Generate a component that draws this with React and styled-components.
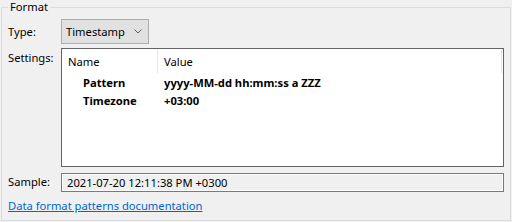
import { createGlobalStyle } from "styled-components";
import styled from "styled-components";

const GlobalStyle = createGlobalStyle`
  html, body {
    margin: 0;
    padding: 0;
    background: #f0f0f0;
  }
  body {
    font-family: "Noto Sans", "Segoe UI", sans-serif;
    font-size: 11.2px;
    color: #000;
  }
`;

const Page = styled.div`
  width: 512px;
  height: 222px;
  padding: 0 1px;
  box-sizing: border-box;
  background: #f0f0f0;
`;

const Group = styled.fieldset`
  margin: 0;
  height: 221px;
  box-sizing: border-box;
  border: 1px solid #dcdcdc;
  padding: 5px 6px 0 6px;
  display: grid;
  grid-template-columns: 53px 1fr;
  grid-template-rows: 25px 119px 21px auto;
  row-gap: 4px;
  min-width: 0;
`;

const Legend = styled.legend`
  padding: 0 2px;
  line-height: 14px;
`;

const Label = styled.div`
  line-height: 16px;
  align-self: ${(p) => (p.$top ? "start" : "center")};
  padding-top: ${(p) => (p.$top ? "2px" : "0")};
`;

const Combo = styled.div`
  width: 88px;
  box-sizing: border-box;
  border: 1px solid #adadad;
  background: #e1e1e1;
  display: flex;
  align-items: center;
  justify-content: space-between;
  padding: 0 6px 0 4px;
`;

const Table = styled.div`
  width: 443px;
  box-sizing: border-box;
  border: 1px solid #646464;
  background: #fff;
`;

const Row = styled.div`
  display: grid;
  grid-template-columns: 96px 1fr;
  height: ${(p) => (p.$head ? "24px" : "18px")};
  align-items: center;
  font-weight: ${(p) => (p.$head ? 400 : 700)};
`;

const Cell = styled.div`
  height: 100%;
  display: flex;
  align-items: center;
  padding-left: ${(p) => p.$indent || 6}px;
  border-right: ${(p) => (p.$sep ? "1px solid #e5e5e5" : "none")};
  margin-right: ${(p) => (p.$last ? "1px" : "0")};
  white-space: nowrap;
`;

const SampleField = styled.div`
  width: 443px;
  box-sizing: border-box;
  border: 1px solid #7a7a7a;
  box-shadow: inset 0 0 0 1px #ffffff;
  background: #f0f0f0;
  display: flex;
  align-items: center;
  padding-left: 5px;
  margin-top: 2px;
`;

const DocLink = styled.a`
  grid-column: 1 / span 2;
  color: #0066cc;
  text-decoration: underline;
  line-height: 16px;
  margin-top: 2px;
  cursor: pointer;
`;

const Chevron = () => (
  <svg width="8" height="5" viewBox="0 0 8 5">
    <path d="M0.5 0.5 L4 4 L7.5 0.5" fill="none" stroke="#606060" strokeWidth="1" />
  </svg>
);

const settings = [
  { name: "Pattern", value: "yyyy-MM-dd hh:mm:ss a ZZZ" },
  { name: "Timezone", value: "+03:00" },
];

export default function App() {
  return (
    <Page>
      <GlobalStyle />
      <Group>
        <Legend>Format</Legend>
        <Label>Type:</Label>
        <Combo>
          <span>Timestamp</span>
          <Chevron />
        </Combo>
        <Label $top>Settings:</Label>
        <Table>
          <Row $head>
            <Cell $sep>Name</Cell>
            <Cell $sep $last>Value</Cell>
          </Row>
          {settings.map((s) => (
            <Row key={s.name}>
              <Cell $indent={21}>{s.name}</Cell>
              <Cell>{s.value}</Cell>
            </Row>
          ))}
        </Table>
        <Label>Sample:</Label>
        <SampleField>2021-07-20 12:11:38 PM +0300</SampleField>
        <DocLink>Data format patterns documentation</DocLink>
      </Group>
    </Page>
  );
}
